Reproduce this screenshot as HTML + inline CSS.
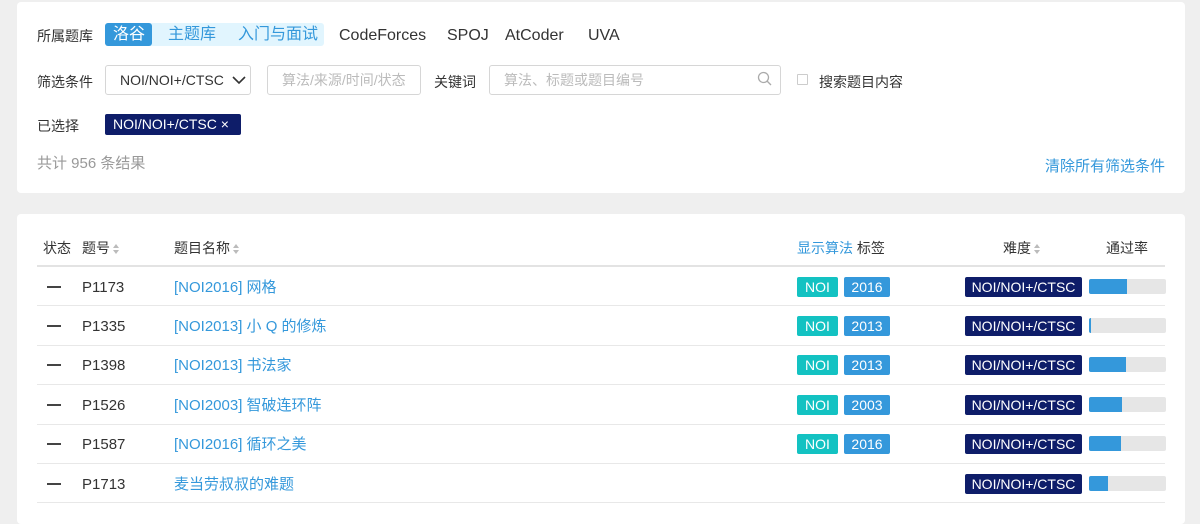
<!DOCTYPE html><html><head><meta charset="utf-8"><style>
*{margin:0;padding:0;box-sizing:border-box}
body{width:1200px;height:509px;background:#efefef;font-family:"Liberation Sans","Noto Sans CJK SC",sans-serif;font-size:15px;color:#333;position:relative;overflow:hidden}
.card{position:absolute;left:17px;width:1168px;background:#fff;border-radius:4px}
.a{position:absolute;white-space:nowrap;line-height:22px}
.blue{color:#3498db}
.box{position:absolute;border:1px solid #d6d6d6;border-radius:3px;height:30px;font-size:14px;line-height:28px;padding-left:14px;color:#bbb}
.tag{position:absolute;height:20px;line-height:20px;color:#fff;font-size:14px;text-align:center;border-radius:2px}
.noi{background:#13c2c2;width:41px;left:797px}
.yr{background:#3498db;width:46px;left:844px}
.df{background:#0e1d69;width:117px;left:965px}
.bar{position:absolute;left:1089px;width:77px;height:15px;background:#e6e6e6;border-radius:2px}
.bar i{display:block;height:100%;background:#3498db;border-radius:2px 0 0 2px}
.line{position:absolute;left:37px;width:1128px;height:1px;background:#e8e8e8}
.sort{display:inline-block;width:8px;vertical-align:middle;margin-left:2px}
.dash{position:absolute;left:47px;width:14px;height:2px;background:#444}
</style></head><body>
<div class="card" style="top:2px;height:191px"></div>
<div class="a" style="left:37px;top:25px;font-size:14px">所属题库</div>
<div style="position:absolute;left:105px;top:23px;width:219px;height:23px;background:#e1f5fe;border-radius:3px"></div>
<div style="position:absolute;left:105px;top:23px;width:47px;height:23px;background:#3498db;border-radius:3px"></div>
<div class="a" style="left:113px;top:24px;font-size:16px;color:#fff">洛谷</div>
<div class="a blue" style="left:168px;top:24px;font-size:16px">主题库</div>
<div class="a blue" style="left:238px;top:24px;font-size:16px">入门与面试</div>
<div class="a" style="left:339px;top:25px;font-size:16px">CodeForces</div>
<div class="a" style="left:447px;top:25px;font-size:16px">SPOJ</div>
<div class="a" style="left:505px;top:25px;font-size:16px">AtCoder</div>
<div class="a" style="left:588px;top:25px;font-size:16px">UVA</div>

<div class="a" style="left:37px;top:71px;font-size:14px">筛选条件</div>
<div class="box" style="left:105px;top:65px;width:146px;color:#333">NOI/NOI+/CTSC</div>
<svg style="position:absolute;left:231px;top:74px" width="16" height="12"><path d="M2 3l6 6 6-6" stroke="#333" stroke-width="1.6" fill="none"/></svg>
<div class="box" style="left:267px;top:65px;width:154px">算法/来源/时间/状态</div>
<div class="a" style="left:434px;top:71px;font-size:14px">关键词</div>
<div class="box" style="left:489px;top:65px;width:292px">算法、标题或题目编号</div>
<svg style="position:absolute;left:757px;top:71px" width="16" height="16"><circle cx="6.5" cy="6.5" r="5" stroke="#aaa" stroke-width="1.3" fill="none"/><path d="M10 10l4 4" stroke="#aaa" stroke-width="1.3"/></svg>
<div style="position:absolute;left:797px;top:74px;width:11px;height:11px;border:1px solid #ccc;border-radius:1px"></div>
<div class="a" style="left:819px;top:71px;font-size:14px">搜索题目内容</div>

<div class="a" style="left:37px;top:115px;font-size:14px">已选择</div>
<div style="position:absolute;left:105px;top:114px;width:136px;height:21px;background:#0e1d69;border-radius:2px;color:#fff;font-size:14px;line-height:21px;padding-left:8px">NOI/NOI+/CTSC ×</div>
<div class="a" style="left:37px;top:153px;color:#999">共计 956 条结果</div>
<div class="a blue" style="left:1045px;top:156px">清除所有筛选条件</div>

<div class="card" style="top:214px;height:310px"></div>
<div class="a" style="left:43px;top:237px;font-size:14px">状态</div>
<div class="a" style="left:82px;top:237px;font-size:14px">题号<svg class="sort" height="12"><path d="M4 1l3 4H1zM4 11l3-4H1z" fill="#bbb"/></svg></div>
<div class="a" style="left:174px;top:237px;font-size:14px">题目名称<svg class="sort" height="12"><path d="M4 1l3 4H1zM4 11l3-4H1z" fill="#bbb"/></svg></div>
<div class="a" style="left:797px;top:237px;font-size:14px"><span class="blue">显示算法</span> 标签</div>
<div class="a" style="left:1003px;top:237px;font-size:14px">难度<svg class="sort" height="12"><path d="M4 1l3 4H1zM4 11l3-4H1z" fill="#bbb"/></svg></div>
<div class="a" style="left:1106px;top:237px;font-size:14px">通过率</div>
<div class="line" style="top:265px;height:2px;background:#e3e3e3"></div>

<div class="line" style="top:305px"></div><div class="line" style="top:345px"></div><div class="line" style="top:384px"></div><div class="line" style="top:424px"></div><div class="line" style="top:463px"></div><div class="line" style="top:502px"></div>

<div class="dash" style="top:286px"></div><div class="a" style="left:82px;top:277px">P1173</div><div class="a blue" style="left:174px;top:277px">[NOI2016] 网格</div>
<div class="tag noi" style="top:277px">NOI</div><div class="tag yr" style="top:277px">2016</div><div class="tag df" style="top:277px">NOI/NOI+/CTSC</div><div class="bar" style="top:279px"><i style="width:38px"></i></div>

<div class="dash" style="top:325px"></div><div class="a" style="left:82px;top:316px">P1335</div><div class="a blue" style="left:174px;top:316px">[NOI2013] 小 Q 的修炼</div>
<div class="tag noi" style="top:316px">NOI</div><div class="tag yr" style="top:316px">2013</div><div class="tag df" style="top:316px">NOI/NOI+/CTSC</div><div class="bar" style="top:318px"><i style="width:2px"></i></div>

<div class="dash" style="top:364px"></div><div class="a" style="left:82px;top:355px">P1398</div><div class="a blue" style="left:174px;top:355px">[NOI2013] 书法家</div>
<div class="tag noi" style="top:355px">NOI</div><div class="tag yr" style="top:355px">2013</div><div class="tag df" style="top:355px">NOI/NOI+/CTSC</div><div class="bar" style="top:357px"><i style="width:37px"></i></div>

<div class="dash" style="top:404px"></div><div class="a" style="left:82px;top:395px">P1526</div><div class="a blue" style="left:174px;top:395px">[NOI2003] 智破连环阵</div>
<div class="tag noi" style="top:395px">NOI</div><div class="tag yr" style="top:395px">2003</div><div class="tag df" style="top:395px">NOI/NOI+/CTSC</div><div class="bar" style="top:397px"><i style="width:33px"></i></div>

<div class="dash" style="top:443px"></div><div class="a" style="left:82px;top:434px">P1587</div><div class="a blue" style="left:174px;top:434px">[NOI2016] 循环之美</div>
<div class="tag noi" style="top:434px">NOI</div><div class="tag yr" style="top:434px">2016</div><div class="tag df" style="top:434px">NOI/NOI+/CTSC</div><div class="bar" style="top:436px"><i style="width:32px"></i></div>

<div class="dash" style="top:483px"></div><div class="a" style="left:82px;top:474px">P1713</div><div class="a blue" style="left:174px;top:474px">麦当劳叔叔的难题</div>
<div class="tag df" style="top:474px">NOI/NOI+/CTSC</div><div class="bar" style="top:476px"><i style="width:19px"></i></div>
</body></html>
